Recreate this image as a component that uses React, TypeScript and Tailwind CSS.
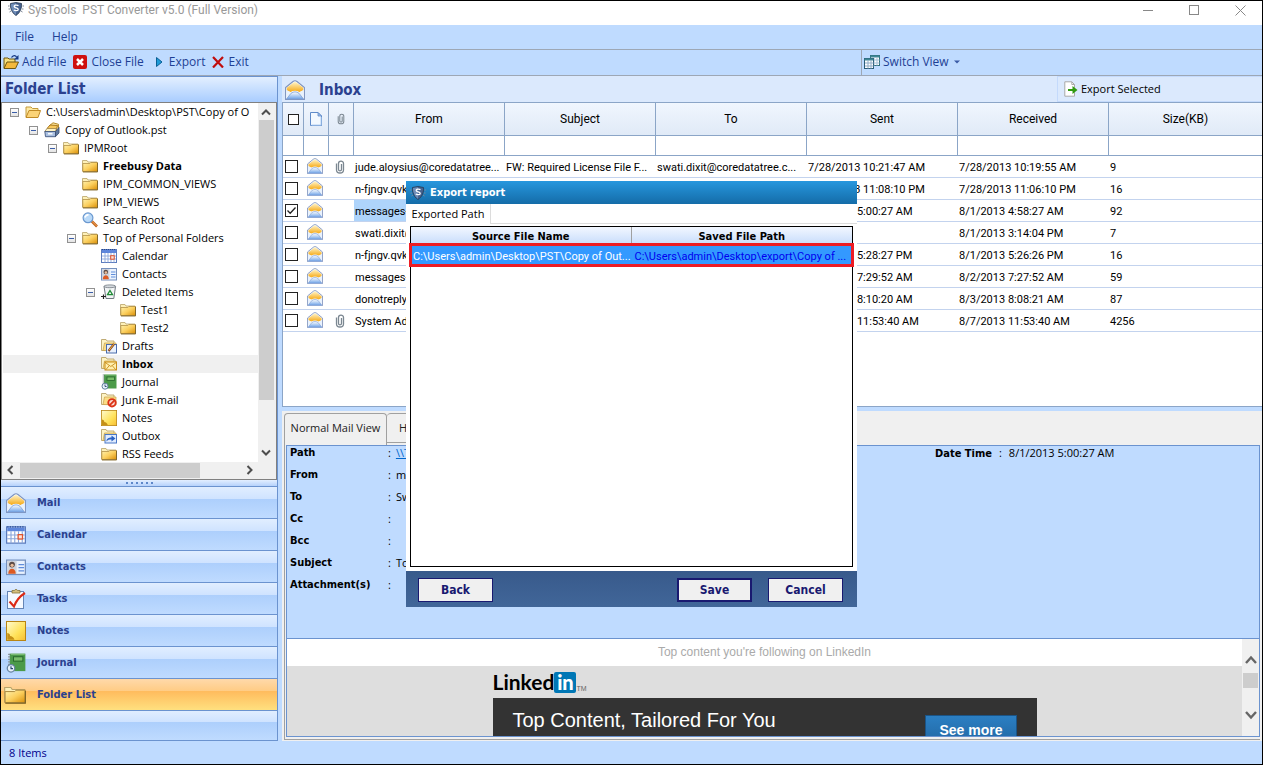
import React from "react";

type IconProps = { className?: string };

function FolderIcon({ className = "size-4 shrink-0" }: IconProps) {
  return (
    <svg viewBox="0 0 16 16" className={className} aria-hidden="true">
      <defs>
        <linearGradient id="fold" x1="0" y1="0" x2="1" y2="1">
          <stop offset="0" stopColor="#fff3b0" />
          <stop offset="0.5" stopColor="#fbcf5e" />
          <stop offset="1" stopColor="#d98e06" />
        </linearGradient>
      </defs>
      <path d="M0.500 13V2.500h4.500l1 1.500h9v4z" fill="#fdf0b8" stroke="#b9a36a" strokeWidth="0.8" />
      <path d="M0.800 5.500h7l1-1h6.700v9.200H0.800z" fill="url(#fold)" stroke="#a8843a" strokeWidth="0.700" />
      <path d="M1 13.900h14.500V5" fill="none" stroke="#7a6226" strokeWidth="0.900" />
    </svg>
  );
}

function OpenFolderIcon({ className = "size-4 shrink-0" }: IconProps) {
  return (
    <svg viewBox="0 0 16 16" className={className} aria-hidden="true">
      <path d="M1 13V3h5l1.500 1.500H13V7" fill="#fde9a5" stroke="#c39a3c" />
      <path d="M1 13.500 4 6.500h11.500L13 13.500z" fill="#fbd377" stroke="#c08a26" />
    </svg>
  );
}

function AddFileIcon() {
  return (
    <svg viewBox="0 0 16 16" className="size-4 shrink-0" aria-hidden="true">
      <path d="M1 14V4h4l1 1h6v3" fill="#f7e07c" stroke="#6d5711" />
      <path d="M1 14.500 4 8h11.500L12.500 14.500z" fill="#f3b93b" stroke="#6d5711" />
      <path d="M8.500 3.500c1.500-2.500 4-2.500 5-.5" fill="none" stroke="#173a86" strokeWidth="1.300" />
      <path d="M15.500 1v4.500H11z" fill="#173a86" />
    </svg>
  );
}

function PstIcon() {
  return (
    <svg viewBox="0 0 16 16" className="size-4 shrink-0" aria-hidden="true">
      <path d="M5 4 9 .8l5.500 1.500V8" fill="#fde9a5" stroke="#b58a2b" />
      <path d="M3 6.500 6 3l7.500.5L12 9" fill="#f8c95d" stroke="#a8761d" />
      <path d="M.8 9.500 3 6.500h9.500l-1 3z" fill="#fff2c2" stroke="#9a8248" strokeWidth="0.800" />
      <path d="M.8 9.500h10.700v5.200H1.500z" fill="#a9bfe0" stroke="#42577f" strokeWidth="0.900" />
      <path d="m11.500 9.500 3.500-4v5.500l-3.500 3.700z" fill="#5f789f" stroke="#3b4e70" strokeWidth="0.800" />
      <path d="M4 11.800h4.500" stroke="#fff" strokeWidth="1.400" />
    </svg>
  );
}

function SearchIcon() {
  return (
    <svg viewBox="0 0 16 16" className="size-4 shrink-0" aria-hidden="true">
      <path d="m9.500 9 5.500 5.500" stroke="#c2661b" strokeWidth="2.600" />
      <path d="m10 9.300 4.700 4.700" stroke="#f2a25c" strokeWidth="1" />
      <circle cx="6" cy="5.800" r="4.900" fill="#b9d9f8" stroke="#6b98cf" strokeWidth="1.200" />
      <path d="M3 5.500C3.300 3.500 5 2.700 6.500 3" stroke="#fff" strokeWidth="1.800" fill="none" />
    </svg>
  );
}

function CalendarIcon({ className = "size-4 shrink-0" }: IconProps) {
  return (
    <svg viewBox="0 0 16 16" className={className} aria-hidden="true">
      <rect x="0.500" y="1.500" width="15" height="13" fill="#fff" stroke="#5c7cbd" />
      <rect x="1" y="2" width="14" height="3" fill="#5d86dc" />
      <path d="M1 1.500h14" stroke="#24478f" strokeDasharray="1 1" />
      <path d="M1 8h14M1 11h14M4 5v9.500M7 5v9.500M10 5v9.500M13 5v9.500" stroke="#8aa6da" strokeWidth="0.900" />
      <rect x="9.700" y="7.700" width="3.500" height="3.500" fill="#fbe3da" stroke="#e0532c" />
    </svg>
  );
}

function ContactsIcon({ className = "size-4 shrink-0" }: IconProps) {
  return (
    <svg viewBox="0 0 16 16" className={className} aria-hidden="true">
      <rect x="0.500" y="2.500" width="15" height="11.500" fill="#eaf2fd" stroke="#7590bd" />
      <rect x="1" y="3" width="7.500" height="10.500" fill="#cfd4dc" />
      <circle cx="4.800" cy="6" r="2.300" fill="#5c4a44" />
      <circle cx="4.900" cy="6.600" r="1.300" fill="#e9bd9a" />
      <path d="M1.800 13.300c0-5.300 6-5.300 6 0z" fill="#dd5a22" />
      <path d="M10 6h4.500M10 8.500h4.500M10 11h4.500" stroke="#5f8ddb" />
    </svg>
  );
}

function DeletedIcon() {
  return (
    <svg viewBox="0 0 16 16" className="size-4 shrink-0" aria-hidden="true">
      <path d="M3 2.500h11.500L12.800 14.500H5z" fill="#f2f4f6" stroke="#727a82" />
      <ellipse cx="8.800" cy="2.300" rx="5.800" ry="1.400" fill="#d4d9de" stroke="#727a82" strokeWidth="0.800" />
      <path d="m9 6.500 2.500 4.200H6.500z" fill="none" stroke="#1e8a35" strokeWidth="1.300" />
      <path d="M0 12.500h5M2.500 10.500v4.500" stroke="#222" strokeWidth="1.200" />
    </svg>
  );
}

function FolderWith({ children }: { children: React.ReactNode }) {
  return (
    <svg viewBox="0 0 16 16" className="size-4 shrink-0" aria-hidden="true">
      <path d="M.5 12.500V1.500h4.500l1 1.500h7v9.500z" fill="#fdf3c4" stroke="#b9a36a" strokeWidth="0.900" />
      <path d="M2 12.500 3.500 5H15v8z" fill="#fbdc85" stroke="#c6a04a" strokeWidth="0.700" />
      {children}
    </svg>
  );
}

function DraftsIcon() {
  return (
    <FolderWith>
      <rect x="5.500" y="6.500" width="10" height="8.500" fill="#e8f0fc" stroke="#4a6cab" />
      <path d="m7.500 13 5.500-7" stroke="#7d3f26" strokeWidth="2.200" />
      <path d="m8 12.300 4.700-6" stroke="#f7b83d" strokeWidth="1" />
    </FolderWith>
  );
}

function InboxIcon() {
  return (
    <FolderWith>
      <rect x="4" y="6" width="11.500" height="8" fill="#ffefae" stroke="#c98d1b" />
      <path d="m4 6.300 5.800 4.200 5.700-4.200M4.500 14l3.700-4.300M15 14l-3.700-4.300" fill="none" stroke="#c98d1b" strokeWidth="0.900" />
    </FolderWith>
  );
}

function JunkIcon() {
  return (
    <FolderWith>
      <circle cx="11" cy="10.800" r="3.700" fill="#f9d9cf" stroke="#dc3216" strokeWidth="1.900" />
      <path d="m8.500 13.300 5-5" stroke="#dc3216" strokeWidth="1.800" />
    </FolderWith>
  );
}

function OutboxIcon() {
  return (
    <FolderWith>
      <rect x="4" y="6.500" width="11.500" height="8.500" fill="#e1ecfd" stroke="#4a78c7" />
      <path d="M5.500 13.500c0-3 2-4 5-4V7.500L14.500 10.500 10.500 13.500v-2c-2 0-4 .3-5 2z" fill="#2a62c4" />
    </FolderWith>
  );
}

function JournalIcon({ className = "size-4 shrink-0" }: IconProps) {
  return (
    <svg viewBox="0 0 16 16" className={className} aria-hidden="true">
      <path d="M3 .5h12.500v14H3z" fill="#4b9a49" />
      <path d="M2.500 .5v14" stroke="#888f96" strokeWidth="1.600" strokeDasharray="1 1" />
      <path d="M4 1h11" stroke="#96cc8c" strokeWidth="0.700" />
      <rect x="6" y="3" width="7.500" height="3.500" fill="#79bd6a" stroke="#27672c" strokeWidth="0.800" />
      <circle cx="4" cy="12.200" r="3" fill="#e8f1fb" stroke="#63809f" />
      <path d="M4 10.500v2h1.600" fill="none" stroke="#26466b" strokeWidth="0.900" />
    </svg>
  );
}

function NotesIcon({ className = "size-4 shrink-0" }: IconProps) {
  return (
    <svg viewBox="0 0 16 16" className={className} aria-hidden="true">
      <defs>
        <linearGradient id="note" x1="0" y1="0" x2="1" y2="1">
          <stop offset="0" stopColor="#fffbd0" />
          <stop offset="0.600" stopColor="#ffe259" />
          <stop offset="1" stopColor="#f6bd33" />
        </linearGradient>
      </defs>
      <rect x="0.400" y="0.400" width="15.200" height="15.200" fill="url(#note)" stroke="#b98512" strokeWidth="0.800" />
      <path d="M1 9.500c2 .5 2.500 1.500 2.200 2.500 1.500 0 3 1 3.600 3H1z" fill="#c59016" />
    </svg>
  );
}

function TasksIcon() {
  return (
    <svg viewBox="0 0 20 20" className="size-5 shrink-0" aria-hidden="true">
      <rect x="1.500" y="2.500" width="16" height="17" fill="#f5f9ff" stroke="#6585b6" />
      <path d="M6 4V1.500h2.500c.5-1.500 2.500-1.500 3 0H14V4z" fill="#d4c07e" stroke="#857238" strokeWidth="0.800" />
      <path d="M3.500 12.500 8 17.500C10 12 13.500 7.500 19 4" fill="none" stroke="#dc2a16" strokeWidth="2.100" />
    </svg>
  );
}

function MailOpenIcon({ className = "size-5 shrink-0" }: IconProps) {
  return (
    <svg viewBox="0 0 20 20" className={className} aria-hidden="true">
      <defs>
        <linearGradient id="flap" x1="0" y1="0" x2="0" y2="1">
          <stop offset="0" stopColor="#fff3c4" />
          <stop offset="1" stopColor="#f6a914" />
        </linearGradient>
        <linearGradient id="env" x1="0" y1="0" x2="0" y2="1">
          <stop offset="0" stopColor="#ffffff" />
          <stop offset="1" stopColor="#6ea3e8" />
        </linearGradient>
      </defs>
      <path d="M.6 7.500 8 1.500c1.300-1 2.700-1 4 0l7.400 6v12H.6z" fill="#f3f7fd" stroke="#7f93bd" strokeWidth="1.100" />
      <path d="M1.800 7.800 8.500 2.500c1-.7 2-.7 3 0l6.700 5.300v2.700l-3.700 1.500c-3-1.800-6-1.800-9 0L1.800 10.500z" fill="url(#flap)" />
      <path d="M1.200 9.800 6 12.500c2.600-1.800 5.400-1.800 8 0l4.800-2.700V19H1.200z" fill="#e9f2fd" />
      <path d="M1.500 19 6 13.300c2.600-1.900 5.400-1.900 8 0l4.500 5.700z" fill="url(#env)" stroke="#7f9fd4" strokeWidth="0.800" />
    </svg>
  );
}

function DocIcon() {
  return (
    <svg viewBox="0 0 12 14" className="h-3.5 w-3" aria-hidden="true">
      <path d="M.5.500h7.500L11.500 4v9.500H.500z" fill="#f3f9ff" stroke="#5f8bc9" />
      <path d="M8 .5V4h3.500z" fill="#9ec0ec" stroke="#5f8bc9" strokeWidth="0.800" />
      <path d="M1.500 13h9.500V5" stroke="#b6d3f5" fill="none" />
    </svg>
  );
}

function ClipIcon({ className = "h-3.5 w-2.5" }: IconProps) {
  return (
    <svg viewBox="0 0 10 14" className={className} aria-hidden="true">
      <path d="M1.500 3.500V10c0 4 7 4 7 0V3.500c0-3.200-5-3.200-5 0v6c0 1.800 3 1.800 3 0V4" fill="none" stroke="#7b8791" strokeWidth="1.300" />
    </svg>
  );
}

function ShieldIcon({ className = "h-3.5 w-4 shrink-0" }: IconProps) {
  return (
    <svg viewBox="0 0 16 14" className={className} aria-hidden="true">
      <path d="M2.500 1.500 8 .5l5.500 1C14 6 12 11 8 13.500 4 11 2 6 2.500 1.500z" fill="#46628f" stroke="#26374f" strokeWidth="0.800" />
      <path d="M3 2l5-.8V13C4.500 10.500 2.800 6 3 2z" fill="#6f8db8" />
      <path d="M10.500 3.600c-2-1-4.500-.5-4.300 1 .2 1.700 4 1 4 2.800 0 1.500-2.700 1.700-4.400.6" fill="none" stroke="#fff" strokeWidth="1.300" />
      <path d="M0 4h1.500M.5 7H2M14.500 4H16M14 7h1.500M1.500 10 3 9M14.500 10 13 9" stroke="#7d8796" />
    </svg>
  );
}

function ExportDocIcon() {
  return (
    <svg viewBox="0 0 14 16" className="h-4 w-3.5 shrink-0" aria-hidden="true">
      <path d="M.8.800h7L10.500 3.500V15.200H.8z" fill="#fff" stroke="#a9a9a9" />
      <path d="M7.800.8v2.700h2.700" fill="none" stroke="#a9a9a9" />
      <path d="M4 8h4.500V5L13.500 9 8.500 13v-3H4z" fill="#2f9a10" />
    </svg>
  );
}

function SwitchIcon() {
  return (
    <svg viewBox="0 0 16 14" className="h-3.5 w-4 shrink-0" aria-hidden="true">
      <rect x="6.500" y="0.500" width="9" height="10" fill="#fff" stroke="#2f6f7d" />
      <path d="M6.500 1.500h9" stroke="#3d8794" strokeWidth="2" />
      <path d="M7 5h8.500M7 8h8.500M10 2v8.500M13 2v8.500" stroke="#a5bfd6" />
      <rect x="0.500" y="3.500" width="9" height="10" fill="#fff" stroke="#2b5c78" />
      <path d="M.5 4.500h9" stroke="#3d8794" strokeWidth="2" />
      <path d="M1 8h8.500M1 11h8.500M4 5v8.500M7 5v8.500" stroke="#8fabc6" />
    </svg>
  );
}

function Chevron({ d, className = "" }: { d: string; className?: string }) {
  return (
    <svg viewBox="0 0 10 10" className={`size-2.5 shrink-0 ${className}`} aria-hidden="true">
      <path d={d} fill="none" stroke="#4d4d4d" strokeWidth="2" />
    </svg>
  );
}
const UP = "M1 7.500 5 3.500l4 4";
const DOWN = "M1 2.500l4 4 4-4";
const LEFT = "M6.500 1l-4 4 4 4";
const RIGHT = "M3.500 1l4 4-4 4";

const tree: { label: string; level: number; icon: React.ReactNode; open?: boolean; bold?: boolean; selected?: boolean }[] = [
  { label: "C:\\Users\\admin\\Desktop\\PST\\Copy of O", level: 0, icon: <OpenFolderIcon />, open: true },
  { label: "Copy of Outlook.pst", level: 1, icon: <PstIcon />, open: true },
  { label: "IPMRoot", level: 2, icon: <FolderIcon />, open: true },
  { label: "Freebusy Data", level: 3, icon: <FolderIcon />, bold: true },
  { label: "IPM_COMMON_VIEWS", level: 3, icon: <FolderIcon /> },
  { label: "IPM_VIEWS", level: 3, icon: <FolderIcon /> },
  { label: "Search Root", level: 3, icon: <SearchIcon /> },
  { label: "Top of Personal Folders", level: 3, icon: <FolderIcon />, open: true },
  { label: "Calendar", level: 4, icon: <CalendarIcon /> },
  { label: "Contacts", level: 4, icon: <ContactsIcon /> },
  { label: "Deleted Items", level: 4, icon: <DeletedIcon />, open: true },
  { label: "Test1", level: 5, icon: <FolderIcon /> },
  { label: "Test2", level: 5, icon: <FolderIcon /> },
  { label: "Drafts", level: 4, icon: <DraftsIcon /> },
  { label: "Inbox", level: 4, icon: <InboxIcon />, bold: true, selected: true },
  { label: "Journal", level: 4, icon: <JournalIcon /> },
  { label: "Junk E-mail", level: 4, icon: <JunkIcon /> },
  { label: "Notes", level: 4, icon: <NotesIcon /> },
  { label: "Outbox", level: 4, icon: <OutboxIcon /> },
  { label: "RSS Feeds", level: 4, icon: <FolderIcon /> },
];

const nav: { label: string; icon: React.ReactNode; active?: boolean }[] = [
  { label: "Mail", icon: <MailOpenIcon /> },
  { label: "Calendar", icon: <CalendarIcon className="size-5 shrink-0" /> },
  { label: "Contacts", icon: <ContactsIcon className="size-5 shrink-0" /> },
  { label: "Tasks", icon: <TasksIcon /> },
  { label: "Notes", icon: <NotesIcon className="size-5 shrink-0" /> },
  { label: "Journal", icon: <JournalIcon className="size-5 shrink-0" /> },
  { label: "Folder List", icon: <FolderIcon className="size-[22px] shrink-0" />, active: true },
];

const mails = [
  { clip: true, from: "jude.aloysius@coredatatree...", subject: "FW: Required License File F...", to: "swati.dixit@coredatatree.c...", sent: "7/28/2013 10:21:47 AM", received: "7/28/2013 10:19:55 AM", size: "9" },
  { from: "n-fjngv.qvk", sent: "7/28/2013 11:08:10 PM", received: "7/28/2013 11:06:10 PM", size: "16" },
  { checked: true, from: "messages-n", sent: "8/1/2013 5:00:27 AM", received: "8/1/2013 4:58:27 AM", size: "92" },
  { from: "swati.dixit@", received: "8/1/2013 3:14:04 PM", size: "7" },
  { from: "n-fjngv.qvk", sent: "8/1/2013 5:28:27 PM", received: "8/1/2013 5:26:26 PM", size: "16" },
  { from: "messages-n", sent: "8/2/2013 7:29:52 AM", received: "8/2/2013 7:27:52 AM", size: "59" },
  { from: "donotreply", sent: "8/3/2013 8:10:20 AM", received: "8/3/2013 8:08:21 AM", size: "87" },
  { clip: true, from: "System Ad", sent: "8/7/2013 11:53:40 AM", received: "8/7/2013 11:53:40 AM", size: "4256" },
];

const fields: [string, React.ReactNode][] = [
  ["Path", <a href="#path" className="text-[#0066cc] underline">\\Top</a>],
  ["From", "me"],
  ["To", "Sw"],
  ["Cc", ""],
  ["Bcc", ""],
  ["Subject", "To"],
  ["Attachment(s)", ""],
];

const headCell = "border-r border-b border-[#8ba5c7] bg-linear-to-b from-[#f0f6fe] to-[#e0eaf7] font-normal last:border-r-0";
const filterCell = "border-r border-b border-[#8ba5c7] last:border-r-0";
const dataCell = "overflow-hidden whitespace-nowrap border-b border-[#c3d3ee] pt-[2px] pl-px leading-4";

function CheckBox({ label, checked = false, small = false }: { label: string; checked?: boolean; small?: boolean }) {
  return (
    <span className={`relative block shrink-0 ${small ? "size-[11px]" : "size-[13px]"}`}>
      <input
        type="checkbox"
        aria-label={label}
        defaultChecked={checked}
        className="peer block size-full appearance-none border border-[#222] bg-white"
      />
      <svg viewBox="0 0 13 13" className="pointer-events-none absolute inset-0 hidden size-full peer-checked:block" aria-hidden="true">
        <path d="M2.500 6.500 5.200 9.300l5.300-5.800" fill="none" stroke="#222" strokeWidth="1.300" />
      </svg>
    </span>
  );
}

function Sidebar() {
  return (
    <aside className="flex w-[277px] shrink-0 flex-col border-t border-r border-[#6b93cf]">
      <h2 className="flex h-[25px] shrink-0 items-center bg-linear-to-b from-[#e3efff] to-[#a9cdff] pl-1 font-[DejaVu_Sans_Condensed,Noto_Sans,sans-serif] text-[15px] font-bold text-[#2b418f]">
        Folder List
      </h2>
      <div className="flex min-h-0 flex-1 flex-col border border-[#808080] bg-[#f0f0f0] pr-[2px] pb-px">
        <div className="flex min-h-0 flex-1">
          <ul className="min-w-0 flex-1 overflow-hidden bg-white pl-px text-[11px]">
            {tree.map((n, i) => (
              <li key={i} className={`h-[18px] ${n.selected ? "bg-[#f0f0f0]" : ""}`}>
                <div className="flex h-full items-center gap-[5px] whitespace-nowrap" style={{ paddingLeft: 7 + n.level * 19 }}>
                  {n.open ? (
                    <button aria-label={`Collapse ${n.label}`} className="mr-px flex size-[9px] shrink-0 items-center justify-center border border-[#919191] bg-linear-to-b from-white to-[#e4e4e4]">
                      <span className="h-px w-[5px] bg-[#3b5ea8]" />
                    </button>
                  ) : (
                    <span className="mr-px w-[9px] shrink-0" />
                  )}
                  {n.icon}
                  <span className={n.bold ? "font-bold" : ""}>{n.label}</span>
                </div>
              </li>
            ))}
          </ul>
          <div className="flex w-4 shrink-0 flex-col items-center">
            <Chevron d={UP} className="mt-1 mb-[3px]" />
            <div className="h-[280px] w-[15px] bg-[#cdcdcd]" />
            <div className="flex-1" />
            <Chevron d={DOWN} className="my-1" />
          </div>
        </div>
        <div className="flex h-4 shrink-0 items-center pr-5">
          <Chevron d={LEFT} className="mr-1 ml-1" />
          <div className="h-[15px] w-[180px] bg-[#cdcdcd]" />
          <div className="flex-1" />
          <Chevron d={RIGHT} />
        </div>
      </div>
      <div className="flex h-[7px] shrink-0 items-center justify-center gap-[3px] border-b border-[#6b93cf] bg-linear-to-b from-[#e3efff] to-[#b6d2fb]">
        {[0, 1, 2, 3, 4, 5].map((i) => (
          <span key={i} className="size-[2px] bg-[#5f88c9]" />
        ))}
      </div>
      <nav className="shrink-0">
        {nav.map((n) => (
          <a
            key={n.label}
            href="#nav"
            className={`flex h-8 items-center border-b border-[#6b93cf] font-[DejaVu_Sans_Condensed,Noto_Sans,sans-serif] font-bold text-[#2b418f] ${
              n.active
                ? "gap-[11px] bg-[linear-gradient(#ffd9aa,#ffcc85_38%,#ffbb5d_39%,#ffe07f)] pl-[3px]"
                : "gap-[11px] bg-[linear-gradient(#e1eeff,#cfe3ff_38%,#adcffc_39%,#bfdbff)] pl-[5px]"
            }`}
          >
            {n.icon}
            <span className="pt-px">{n.label}</span>
          </a>
        ))}
        <div className="h-[30px] border-b border-[#6b93cf] bg-[linear-gradient(#e1eeff,#cfe3ff_38%,#adcffc_39%,#bfdbff)]" />
      </nav>
    </aside>
  );
}

function MailList() {
  return (
    <section className="flex min-h-0 flex-1 flex-col">
      <div className="flex h-[26px] shrink-0 bg-[#dbe9fd]">
        <div className="flex flex-1 items-center gap-[14px] pt-[2px] pl-[3px]">
          <MailOpenIcon />
          <h1 className="font-[DejaVu_Sans_Condensed,Noto_Sans,sans-serif] text-[15px] leading-5 font-bold text-[#2b418f]">Inbox</h1>
        </div>
        <button className="flex w-[205px] items-center gap-[3px] border border-r-0 border-[#c4dafc] pl-[6px]">
          <ExportDocIcon />
          Export Selected
        </button>
      </div>
      <div className="min-h-0 flex-1 border border-r-0 border-[#8ba5c7] bg-white">
        <table className="w-full table-fixed border-separate border-spacing-0 text-left font-[Roboto,sans-serif] text-[11px]">
          <colgroup>
            <col className="w-[21px]" />
            <col className="w-[25px]" />
            <col className="w-[25px]" />
            <col className="w-[151px]" />
            <col className="w-[151px]" />
            <col className="w-[151px]" />
            <col className="w-[151px]" />
            <col className="w-[151px]" />
            <col />
          </colgroup>
          <thead>
            <tr className="h-[33px] text-center text-xs">
              <th className={headCell}><span className="flex justify-center"><CheckBox label="Select all" small /></span></th>
              <th className={headCell}><span className="flex justify-center"><DocIcon /></span></th>
              <th className={headCell}><span className="flex justify-center"><ClipIcon className="h-3 w-2" /></span></th>
              {["From", "Subject", "To", "Sent", "Received", "Size(KB)"].map((h) => (
                <th key={h} className={headCell}>{h}</th>
              ))}
            </tr>
            <tr className="h-5">
              {[0, 1, 2, 3, 4, 5, 6, 7, 8].map((i) => (
                <td key={i} className={filterCell} />
              ))}
            </tr>
          </thead>
          <tbody>
            {mails.map((m, i) => (
              <tr key={i} className="h-[22px]">
                <td className="border-b border-[#c3d3ee] pl-[2px]"><CheckBox label={`Select message ${i + 1}`} checked={m.checked} /></td>
                <td className="border-b border-[#c3d3ee] pb-px pl-[3px]"><MailOpenIcon className="size-4" /></td>
                <td className="border-b border-[#c3d3ee] pl-[6px]">{m.clip && <ClipIcon />}</td>
                <td className={`${dataCell} ${m.checked ? "bg-[#aed4fb]" : ""}`}>{m.from}</td>
                <td className={dataCell}>{m.subject}</td>
                <td className={dataCell}>{m.to}</td>
                <td className={dataCell}>{m.sent}</td>
                <td className={dataCell}>{m.received}</td>
                <td className={dataCell}>{m.size}</td>
              </tr>
            ))}
          </tbody>
        </table>
      </div>
    </section>
  );
}

function Preview() {
  return (
    <section className="mt-1 flex h-[330px] shrink-0 flex-col bg-[#f0f0f0] pt-[2px] pr-[2px] pb-[1px] pl-[2px]">
      <div className="flex h-8 shrink-0 font-[Open_Sans,sans-serif] text-[#222]">
        <button className="w-[103px] rounded-t border border-b-0 border-[#a0a0a0] pb-[2px]">Normal Mail View</button>
        <button className="mb-[2px] w-[70px] rounded-t border border-l-0 border-[#a0a0a0] pl-3 text-left">Hex</button>
      </div>
      <div className="flex min-h-0 flex-1 flex-col border-b border-l border-[#a0a0a0] pb-[2px] pl-px">
        <div className="flex min-h-0 flex-1 flex-col border border-[#6b93cf] bg-[#bfdbff]">
          <div className="flex h-[193px] shrink-0 border-b border-[#6b93cf] pl-[3px] leading-[14px]">
            <dl className="flex-1">
              {fields.map(([k, v]) => (
                <div key={k} className="flex h-[22px] items-start">
                  <dt className="w-[98px] font-[DejaVu_Sans_Condensed,Noto_Sans,sans-serif] font-bold">{k}</dt>
                  <dd>
                    <span className="mr-[5px]">:</span>
                    {v}
                  </dd>
                </div>
              ))}
            </dl>
            <div className="w-[324px]">
              <b className="mr-[7px] font-[DejaVu_Sans_Condensed,Noto_Sans,sans-serif]">Date Time</b>:
              <span className="ml-[7px]">8/1/2013 5:00:27 AM</span>
            </div>
          </div>
          <div className="flex min-h-0 flex-1 bg-[#dedede] font-[Liberation_Sans,sans-serif]">
            <div className="min-w-0 flex-1 overflow-hidden">
              <p className="bg-white text-center text-xs leading-[27px] text-[#aaa]">Top content you're following on LinkedIn</p>
              <div className="mx-auto w-[544px]">
                <div className="flex h-8 items-center text-black">
                  <span className="font-[Lato,sans-serif] text-[21px] font-bold">Linked</span>
                  <span className="flex h-[21px] w-[22px] items-center justify-center rounded-[2px] bg-[#0077b5] font-[Lato,sans-serif] text-[20px] font-black text-white">in</span>
                  <span className="self-end pb-[5px] text-[7px] leading-[8px] text-[#666]">TM</span>
                </div>
                <div className="flex h-20 items-start justify-between bg-[#333] pr-5 pl-5">
                  <span className="pt-[10px] text-[20px] leading-6 text-white">Top Content, Tailored For You</span>
                  <a href="#more" className="mt-[17px] h-10 border border-[#1b5486] bg-linear-to-b from-[#2b7fc3] to-[#1f5f97] px-[13px] pt-[4px] text-sm font-bold text-white">
                    See more
                  </a>
                </div>
              </div>
            </div>
            <div className="flex w-[17px] shrink-0 flex-col items-center bg-[#f0f0f0] pt-4">
              <svg viewBox="0 0 12 10" className="h-2.5 w-3" aria-hidden="true"><path d="M1 8l5-5.500L11 8" fill="none" stroke="#666" strokeWidth="2.400" /></svg>
              <div className="mt-2 h-[15px] w-[15px] bg-[#cdcdcd]" />
              <svg viewBox="0 0 12 10" className="mt-[22px] h-2.5 w-3" aria-hidden="true"><path d="M1 2l5 5.500L11 2" fill="none" stroke="#666" strokeWidth="2.400" /></svg>
            </div>
          </div>
        </div>
      </div>
    </section>
  );
}

const dialogButton = "h-6 w-[75px] border-[#191970] bg-[#f0f0f0] font-[DejaVu_Sans_Condensed,Noto_Sans,sans-serif] text-xs font-bold text-[#191970]";

function ExportDialog() {
  return (
    <div className="pointer-events-none absolute inset-0 flex items-start justify-center pt-[180px]">
      <div role="dialog" aria-labelledby="dlg-title" className="pointer-events-auto flex h-[426px] w-[451px] flex-col bg-[#f0f0f0]">
        <div className="flex h-[23px] shrink-0 items-center gap-1 bg-linear-to-b from-[#2797de] to-[#146ca8] pl-1">
          <ShieldIcon />
          <h2 id="dlg-title" className="pt-[2px] font-[DejaVu_Sans_Condensed,Noto_Sans,sans-serif] text-[11px] font-bold text-white">Export report</h2>
        </div>
        <div className="flex h-5 shrink-0 bg-white">
          <button className="h-full w-[85px] border-r border-[#dcdcdc] text-[11px]">Exported Path</button>
          <div className="flex-1 border-b border-[#dcdcdc]" />
        </div>
        <div className="flex flex-1 bg-white px-1 pt-[2px] pb-1">
          <div className="min-w-0 flex-1 border border-black">
            <table className="w-full table-fixed border-separate border-spacing-0">
              <thead className="font-[DejaVu_Sans_Condensed,Noto_Sans,sans-serif] text-[11px]">
                <tr className="h-[18px] bg-linear-to-b from-[#f2f7ff] to-[#c6dbfb]">
                  <th className="border-r border-[#a0a0a0] pt-px leading-4 font-bold">Source File Name</th>
                  <th className="pt-px leading-4 font-bold">Saved File Path</th>
                </tr>
              </thead>
              <tbody>
                <tr className="h-5 bg-[#3399ff] font-[Roboto,sans-serif] text-[11px] leading-4 whitespace-nowrap outline-3 -outline-offset-1 outline-[#ed1c24]">
                  <td className="overflow-hidden pt-1 pl-[2px] text-white">C:\Users\admin\Desktop\PST\Copy of Out...</td>
                  <td className="overflow-hidden pt-1 pl-[3px]">
                    <a href="#saved" className="text-[#0000ee]">C:\Users\admin\Desktop\export\Copy of ...</a>
                  </td>
                </tr>
              </tbody>
            </table>
          </div>
        </div>
        <div className="flex h-9 shrink-0 items-center gap-4 bg-linear-to-b from-[#385a8b] to-[#416699] pt-px pr-[14px] pl-3">
          <button className={`${dialogButton} border`}>Back</button>
          <span className="flex-1" />
          <button className={`${dialogButton} border-2`}>Save</button>
          <button className={`${dialogButton} border`}>Cancel</button>
        </div>
      </div>
    </div>
  );
}

export default function App() {
  return (
    <div className="relative flex h-screen w-full flex-col overflow-hidden border border-black bg-[#bfdbff] font-[Open_Sans,Noto_Sans,sans-serif] text-[11px] text-black">
      <header className="flex h-6 shrink-0 items-start gap-1 bg-white pl-[7px] font-[Roboto,sans-serif] text-xs text-[#999]">
        <ShieldIcon className="h-4 w-4 shrink-0" />
        <span className="flex-1 leading-[18px] whitespace-pre">SysTools  PST Converter v5.0 (Full Version)</span>
        <div className="flex h-[18px] items-center gap-9 pr-4">
          <button aria-label="Minimize" className="h-px w-[10px] bg-[#888]" />
          <button aria-label="Maximize" className="size-[10px] border border-[#888]" />
          <button aria-label="Close">
            <svg viewBox="0 0 11 11" className="size-[11px]" aria-hidden="true"><path d="M.5.500l10 10M10.500.500l-10 10" stroke="#888" /></svg>
          </button>
        </div>
      </header>
      <nav className="flex h-[25px] shrink-0 items-center gap-[18px] border-b border-[#9da7b5] pl-[14px] text-xs text-[#1e3f94]">
        <button>File</button>
        <button>Help</button>
      </nav>
      <div className="flex h-[26px] shrink-0 border-b border-[#9da7b5] text-xs text-[#1e3f94]">
        <div className="flex flex-1 items-center gap-[7px] pb-px pl-[2px]">
          <button className="flex items-center gap-[3px]"><AddFileIcon />Add File</button>
          <button className="flex items-center gap-1">
            <svg viewBox="0 0 14 14" className="size-3.5" aria-hidden="true">
              <rect width="14" height="14" rx="2" fill="#cf1010" />
              <path d="M4 4l6 6M10 4l-6 6" stroke="#fff" strokeWidth="2.500" />
            </svg>
            Close File
          </button>
          <button className="flex items-center gap-1 pl-1">
            <svg viewBox="0 0 10 12" className="h-3 w-2.5" aria-hidden="true"><path d="M1.500 1.500 7 6l-5.500 4.500z" fill="#1c9bd8" stroke="#0a5f94" /></svg>
            Export
          </button>
          <button className="flex items-center gap-1">
            <svg viewBox="0 0 12 12" className="size-3" aria-hidden="true"><path d="M1 1l10 10.500M11 1 1 11.500" stroke="#c00d0d" strokeWidth="2.200" /></svg>
            Exit
          </button>
        </div>
        <div className="flex w-[401px] items-center border-l border-[#9da7b5] pb-px pl-[2px]">
          <button className="flex items-center gap-[3px]">
            <SwitchIcon />
            Switch View
            <svg viewBox="0 0 6 4" className="ml-[2px] h-1 w-1.5" aria-hidden="true"><path d="M0 .5h6L3 3.500z" fill="#3a5aa6" /></svg>
          </button>
        </div>
      </div>
      <div className="flex min-h-0 flex-1">
        <Sidebar />
        <main className="ml-1 flex min-w-0 flex-1 flex-col">
          <MailList />
          <Preview />
        </main>
      </div>
      <footer className="flex h-[23px] shrink-0 items-center pt-px pl-2 text-[#00008b]">8 Items</footer>
      <ExportDialog />
    </div>
  );
}
